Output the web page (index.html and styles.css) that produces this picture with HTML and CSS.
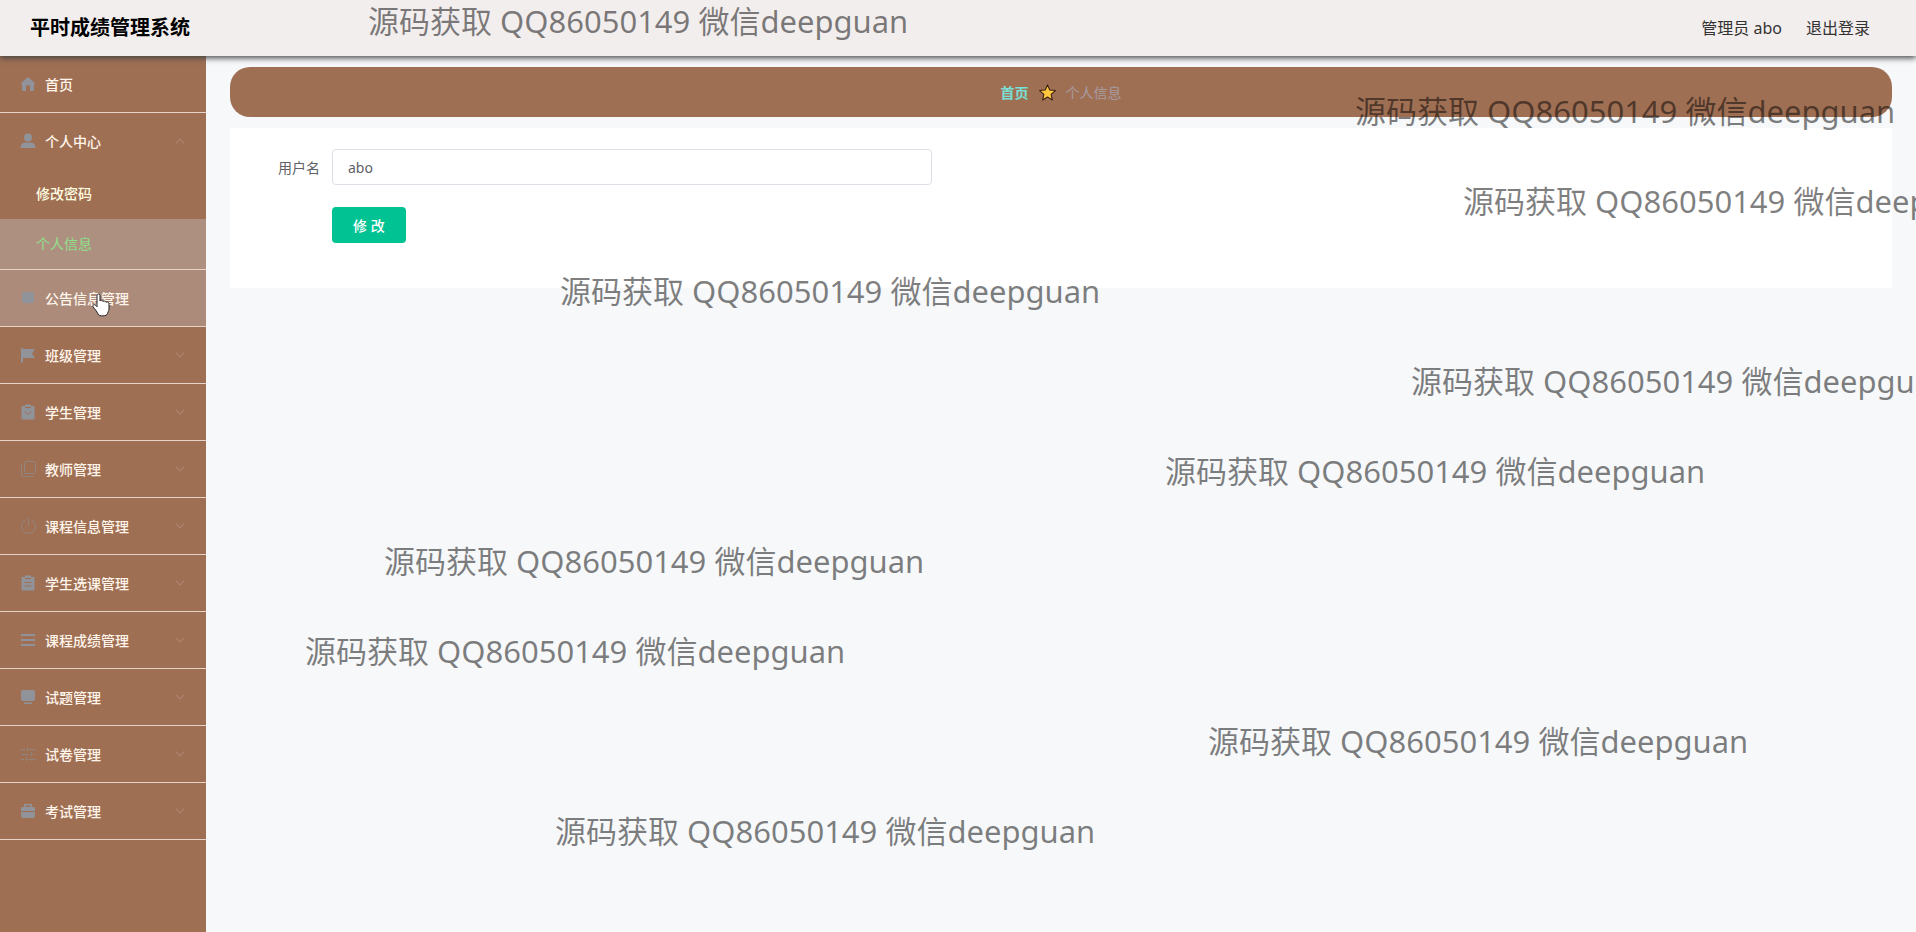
FILE: index.html
```html
<!DOCTYPE html>
<html lang="zh-CN">
<head>
<meta charset="utf-8">
<title>平时成绩管理系统</title>
<link rel="stylesheet" href="styles.css">
</head>
<body>
<svg class="sprite" aria-hidden="true">
  <symbol id="chevron" viewBox="0 0 10 10"><path d="M1.500 3l3.500 3.500L8.500 3" fill="none" stroke="currentColor"/></symbol>
</svg>
<div class="app">
  <header class="topbar">
    <h1 class="brand">平时成绩管理系统</h1>
    <div class="account">
      <span>管理员 abo</span>
      <button type="button" class="logout">退出登录</button>
    </div>
  </header>
  <div class="body">
    <nav class="sidebar">
      <ul class="menu">
        <li class="menu-item"><a class="menu-link" href="#">
          <svg class="icon" viewBox="0 0 16 16"><path d="M8 1L.5 7.500 2 8.500V15h4v-4a2 2 0 0 1 4 0v4h4V8.500l1.500-1z"/></svg>
          <span class="label">首页</span></a></li>
        <li class="menu-item open"><button type="button" class="menu-link">
          <svg class="icon" viewBox="0 0 16 16"><circle cx="8" cy="4.500" r="4"/><path d="M.5 15c0-4 2.500-5.500 5-5.500h5c2.500 0 5 1.500 5 5.500z"/></svg>
          <span class="label">个人中心</span><svg class="arrow up"><use href="#chevron"/></svg></button>
          <ul class="submenu">
            <li><a class="sub-link" href="#">修改密码</a></li>
            <li><a class="sub-link active" href="#">个人信息</a></li>
          </ul></li>
        <li class="menu-item hovered"><button type="button" class="menu-link">
          <svg class="icon" viewBox="0 0 16 16"><path d="M3 2h10a1 1 0 0 1 1 1v9a1 1 0 0 1-1 1H9l-1 2-1-2H3a1 1 0 0 1-1-1V3a1 1 0 0 1 1-1z"/></svg>
          <span class="label">公告信息管理</span></button></li>
        <li class="menu-item"><button type="button" class="menu-link">
          <svg class="icon" viewBox="0 0 16 16"><path d="M1 1h2v1h12l-3 4.500 3 4.500H3v4.500H1z"/></svg>
          <span class="label">班级管理</span><svg class="arrow"><use href="#chevron"/></svg></button></li>
        <li class="menu-item"><button type="button" class="menu-link">
          <svg class="icon" viewBox="0 0 16 16"><path d="M1.500 2H5V.500h6V2h3.500v13.500h-13z"/><path class="cut" d="M5 3.500h6M5 7.500l3 3 3.500-3.500"/></svg>
          <span class="label">学生管理</span><svg class="arrow"><use href="#chevron"/></svg></button></li>
        <li class="menu-item"><button type="button" class="menu-link">
          <svg class="icon line" viewBox="0 0 16 16"><rect x="4.500" y=".5" width="11" height="12" rx="1"/><path d="M1.500 3v11.500a1 1 0 0 0 1 1H13"/></svg>
          <span class="label">教师管理</span><svg class="arrow"><use href="#chevron"/></svg></button></li>
        <li class="menu-item"><button type="button" class="menu-link">
          <svg class="icon line" viewBox="0 0 16 16"><path d="M8.500 0v7.500M5.500 2.200a7 7 0 1 0 6 0"/></svg>
          <span class="label">课程信息管理</span><svg class="arrow"><use href="#chevron"/></svg></button></li>
        <li class="menu-item"><button type="button" class="menu-link">
          <svg class="icon" viewBox="0 0 16 16"><path d="M1.500 2H5V.500h6V2h3.500v13.500h-13z"/><path class="cut" d="M5 3.500h6M4.500 7.500h7M4.500 11h7"/></svg>
          <span class="label">学生选课管理</span><svg class="arrow"><use href="#chevron"/></svg></button></li>
        <li class="menu-item"><button type="button" class="menu-link">
          <svg class="icon" viewBox="0 0 16 16"><path d="M1 2h14v2H1zM1 7h14v2H1zM1 12h14v2H1z"/></svg>
          <span class="label">课程成绩管理</span><svg class="arrow"><use href="#chevron"/></svg></button></li>
        <li class="menu-item"><button type="button" class="menu-link">
          <svg class="icon" viewBox="0 0 16 16"><rect x="1" y="1" width="14" height="11" rx="2"/><path d="M4 13.500h8V15H4z"/></svg>
          <span class="label">试题管理</span><svg class="arrow"><use href="#chevron"/></svg></button></li>
        <li class="menu-item"><button type="button" class="menu-link">
          <svg class="icon line" viewBox="0 0 16 16"><path d="M1 3.500h4M9 3.500h6M1 8.500h8M13 8.500h2M1 13.500h3M8 13.500h7M7.500 1.500v4M11.500 6.500v4M6.500 11.500v4"/></svg>
          <span class="label">试卷管理</span><svg class="arrow"><use href="#chevron"/></svg></button></li>
        <li class="menu-item"><button type="button" class="menu-link">
          <svg class="icon" viewBox="0 0 16 16"><path d="M4 4V1h8v3h2a1 1 0 0 1 1 1v3H1V5a1 1 0 0 1 1-1h2zm1.500 0h5V2.500h-5zM1 9h14v4a2 2 0 0 1-2 2H3a2 2 0 0 1-2-2z"/></svg>
          <span class="label">考试管理</span><svg class="arrow"><use href="#chevron"/></svg></button></li>
      </ul>
    </nav>
    <main class="content">
      <nav class="crumbs" aria-label="位置">
        <a class="crumb-home" href="#">首页</a>
        <svg class="star" viewBox="0 0 16 16"><path d="M8 .8l2.100 4.900 5.300.500-4 3.500 1.200 5.300L8 12.200 3.400 15l1.200-5.300-4-3.500 5.300-.500z"/></svg>
        <span class="crumb-current">个人信息</span>
      </nav>
      <form class="card">
        <div class="field">
          <label class="field-label" for="username">用户名</label>
          <input class="field-input" id="username" type="text" value="abo">
        </div>
        <div class="actions"><button type="button" class="submit">修 改</button></div>
      </form>
    </main>
  </div>
  <div class="watermarks" aria-hidden="true">
    <span class="mark m1">源码获取 QQ86050149 微信deepguan</span>
    <span class="mark m2">源码获取 QQ86050149 微信deepguan</span>
    <span class="mark m3">源码获取 QQ86050149 微信deepguan</span>
    <span class="mark m4">源码获取 QQ86050149 微信deepguan</span>
    <span class="mark m5">源码获取 QQ86050149 微信deepguan</span>
    <span class="mark m6">源码获取 QQ86050149 微信deepguan</span>
    <span class="mark m7">源码获取 QQ86050149 微信deepguan</span>
    <span class="mark m8">源码获取 QQ86050149 微信deepguan</span>
    <span class="mark m9">源码获取 QQ86050149 微信deepguan</span>
    <span class="mark m10">源码获取 QQ86050149 微信deepguan</span>
  </div>
  <svg class="pointer" viewBox="0 0 18 24" aria-hidden="true"><path d="M5 2.500C5 .500 8 .500 8 2.500V8c.500-1 2.700-.800 2.900.500.600-.900 2.700-.600 2.900.700.800-.700 3.200-.200 3.200 1.400V16c0 2-1.400 3-1.400 4.500-.500 3-8.600 3.300-9.600.500C5.500 19 2 15.500 1 13.500c-.600-1.500 1.200-2.600 2.500-1.300L5 13.700z"/></svg>
</div>
</body>
</html>
```
FILE: styles.css
```css
* { box-sizing: border-box; }

body {
  margin: 0;
  font-family: "Noto Sans", "Noto Sans CJK SC", sans-serif;
  font-size: 14px;
  color: #606266;
}

button, input { font: inherit; }
button { border: 0; background: none; cursor: pointer; }
a { text-decoration: none; }
ul { list-style: none; margin: 0; padding: 0; }

.sprite { display: none; }

.app {
  position: relative;
  display: flex;
  flex-direction: column;
  min-height: 100vh;
  overflow: hidden;
  background: #f7f8fa;
}

.topbar {
  position: relative;
  z-index: 1;
  display: flex;
  align-items: center;
  justify-content: space-between;
  height: 56px;
  padding: 0 46px 0 30px;
  background: #f3eeee;
  box-shadow: 0 2px 6px #444;
}

.brand { margin: 0; font-size: 20px; line-height: 24px; color: #000; }

.account {
  display: flex;
  gap: 24px;
  font-size: 16px;
  line-height: 24px;
  color: #333;
}

.logout { padding: 0; color: #333; }

.body { display: flex; flex: 1; }

.sidebar { width: 206px; flex: none; background: #9f6f54; }

.menu-item { border-bottom: 1px solid #e6d2c6; }
.menu-item.hovered { background: #ac8b7b; }

.menu-link {
  display: flex;
  align-items: center;
  width: 100%;
  height: 56px;
  padding: 0 20px;
  color: #fff5ea;
  text-align: left;
}

.icon { width: 16px; height: 16px; margin-right: 9px; fill: #909399; }
.icon.line { fill: none; stroke: #92857f; }
.cut { fill: none; stroke: #9f6f54; }
.label { flex: 1; font-weight: 500; }
.arrow { width: 12px; height: 12px; color: #ad846d; }
.arrow.up { transform: rotate(180deg); }

.sub-link {
  display: block;
  padding-left: 36px;
  line-height: 50px;
  font-weight: 500;
  color: #fffde0;
}

.sub-link.active { background: #ae9080; color: #8fe08b; font-weight: 400; }

.content {
  flex: 1;
  display: flex;
  flex-direction: column;
  gap: 11px;
  min-width: 0;
  padding: 11px 24px;
}

.crumbs {
  display: flex;
  align-items: center;
  justify-content: center;
  gap: 10px;
  height: 50px;
  border-radius: 20px;
  background: #9f6f54;
}

.crumb-home { font-weight: 700; color: #78e0d4; }
.crumb-current { color: #a99ba0; }
.star { width: 17px; height: 17px; fill: #ffc83d; stroke: #3a2010; stroke-linejoin: round; }

.card {
  display: flex;
  flex-direction: column;
  gap: 22px;
  padding: 21px 48px 45px;
  background: #fff;
}

.field { display: flex; align-items: center; gap: 12px; }
.field-label { width: 42px; }

.field-input {
  width: 600px;
  height: 36px;
  padding: 0 15px;
  border: 1px solid #dcdfe6;
  border-radius: 4px;
  background: #fff;
  color: #606266;
}

.actions { padding-left: 54px; }

.submit {
  height: 36px;
  padding: 0 21px;
  border-radius: 4px;
  background: #00c292;
  color: #fff;
  font-weight: 500;
}

.watermarks {
  position: absolute;
  inset: 0;
  z-index: 2;
  overflow: hidden;
  pointer-events: none;
}

.mark {
  display: block;
  height: 90px;
  font-size: 31px;
  line-height: 42px;
  white-space: nowrap;
  color: rgba(0, 0, 0, 0.5);
}

.m1 { margin-left: 368px; }
.m2 { margin-left: 1355px; }
.m3 { margin-left: 1463px; }
.m4 { margin-left: 560px; }
.m5 { margin-left: 1411px; }
.m6 { margin-left: 1165px; }
.m7 { margin-left: 384px; }
.m8 { margin-left: 305px; }
.m9 { margin-left: 1208px; }
.m10 { margin-left: 555px; }

.pointer {
  position: absolute;
  left: 92px;
  top: 293px;
  z-index: 3;
  width: 18px;
  height: 24px;
  fill: #fff;
  stroke: #222;
}
```
